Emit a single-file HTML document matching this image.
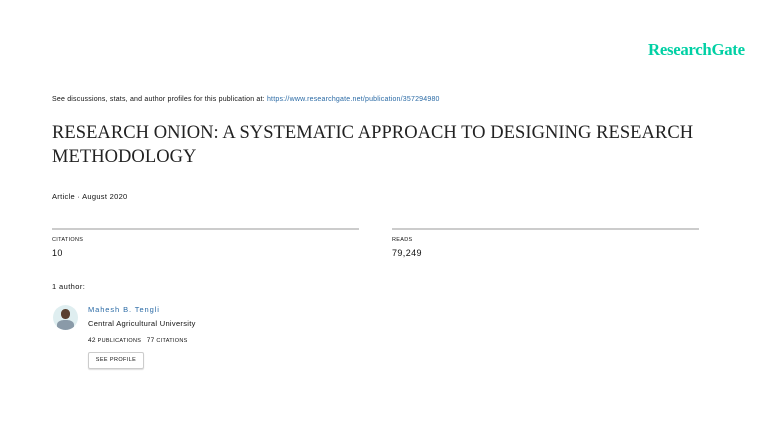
<!DOCTYPE html>
<html><head><style>
body{margin:0;width:784px;height:441px;background:#fff;position:relative;font-family:"Liberation Sans",sans-serif;color:#111;overflow:hidden}
.a{position:absolute;white-space:nowrap}
</style></head><body>
<div class="a" style="left:648px;top:40px;font-family:'Liberation Serif',serif;font-weight:bold;font-size:16.8px;color:#00d0a4;letter-spacing:-0.3px">ResearchGate</div>
<div class="a" style="left:52px;top:96px;font-size:7px;letter-spacing:0.2px">See discussions, stats, and author profiles for this publication at: <span style="color:#2a6aa5">https://www.researchgate.net/publication/357294980</span></div>
<div class="a" style="left:52px;top:121px;font-family:'Liberation Serif',serif;font-size:18.5px;line-height:24px;color:#222;letter-spacing:0.05px">RESEARCH ONION: A SYSTEMATIC APPROACH TO DESIGNING RESEARCH<br>METHODOLOGY</div>
<div class="a" style="left:52px;top:192px;font-size:7.5px;letter-spacing:0.3px">Article · August 2020</div>
<div class="a" style="left:52px;top:228px;width:307px;height:2px;background:#ccc"></div>
<div class="a" style="left:392px;top:228px;width:307px;height:2px;background:#ccc"></div>
<div class="a" style="left:52px;top:237px;font-size:5.5px;letter-spacing:0.3px">CITATIONS</div>
<div class="a" style="left:52px;top:248px;font-size:9px;letter-spacing:0.4px">10</div>
<div class="a" style="left:392px;top:237px;font-size:5.5px;letter-spacing:0.3px">READS</div>
<div class="a" style="left:392px;top:248px;font-size:9px;letter-spacing:0.4px">79,249</div>
<div class="a" style="left:52px;top:282px;font-size:7.5px;letter-spacing:0.4px">1 author:</div>
<div class="a" style="left:53px;top:305px;width:25px;height:25px;border-radius:50%;background:#dfeef0;overflow:hidden"><div style="position:absolute;left:8px;top:4px;width:9px;height:10px;border-radius:45%;background:#5a4030"></div><div style="position:absolute;left:4px;top:15px;width:17px;height:12px;border-radius:40% 40% 0 0;background:#8a9aa8"></div></div>
<div class="a" style="left:88px;top:305px;font-size:7.5px;color:#2a6aa5;letter-spacing:0.9px">Mahesh B. Tengli</div>
<div class="a" style="left:88px;top:319px;font-size:7.5px;letter-spacing:0.3px">Central Agricultural University</div>
<div class="a" style="left:88px;top:337px;font-size:5.5px;letter-spacing:0.3px"><b style="font-size:6.5px;font-weight:normal">42</b> PUBLICATIONS &nbsp; <b style="font-size:6.5px;font-weight:normal">77</b> CITATIONS</div>
<div class="a" style="left:88px;top:352px;width:54px;height:15px;border:1px solid #ccc;border-radius:2px;font-size:5.5px;line-height:15px;text-align:center;letter-spacing:0.4px;box-shadow:0 1px 1px #ddd">SEE PROFILE</div>
</body></html>
